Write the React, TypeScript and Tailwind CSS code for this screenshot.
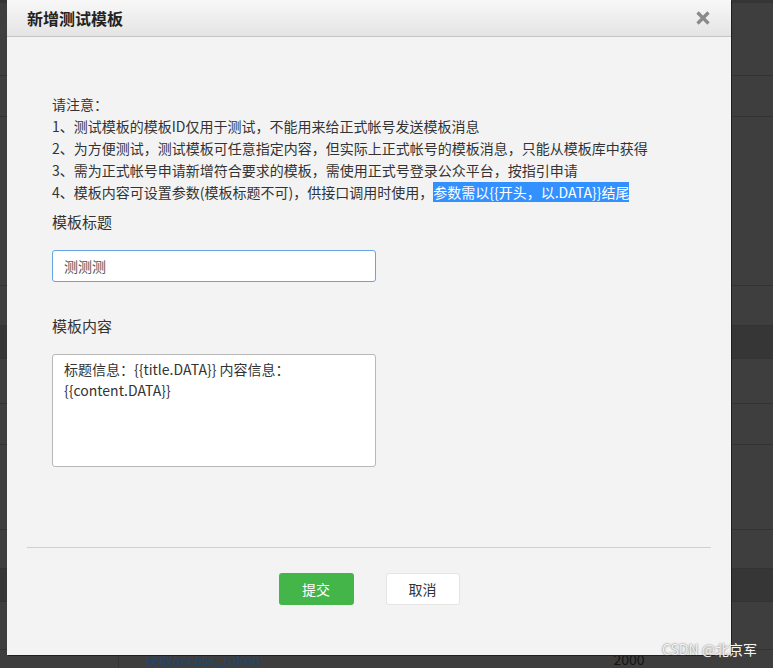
import React from "react";

const font = { fontFamily: '"Noto Sans CJK SC", "Open Sans", sans-serif' };

function CloseIcon() {
  return (
    <svg width="14" height="14" viewBox="0 0 14 14" aria-hidden="true">
      <path d="M1.5 1.5 L12.5 12.5 M12.5 1.5 L1.5 12.5" stroke="#8a8a8a" strokeWidth="3.2" />
    </svg>
  );
}

function BackgroundPage() {
  return (
    <div className="flex h-[668px] w-full flex-col bg-[#3e3e3e]">
      <div className="h-[3px] bg-[#353535]" />
      <div className="h-[73px] border-b border-[#333]" />
      <div className="h-[42px] border-b border-[#333]" />
      <div className="h-[169px] border-b border-[#333]" />
      <div className="h-[41px] border-b border-[#333]" />
      <div className="h-[33px] border-b border-[#333] bg-[#363636]" />
      <div className="h-[45px] border-b border-[#333]" />
      <div className="h-[41px] border-b border-[#333]" />
      <div className="h-[85px] border-b border-[#333]" />
      <div className="h-[40px] border-b border-[#333]" />
      <div className="h-[33px] border-b border-[#333] bg-[#363636]" />
      <div className="h-[48px] border-b border-[#333]" />
      <div className="flex flex-1">
        <div className="w-[119px] border-r border-[#333]" />
        <div className="flex flex-1 items-start pt-[1px] text-[14px] leading-[17px]" style={font}>
          <span className="ml-[26px] text-[#24466b]">获取access_token</span>
          <span className="ml-[353px] text-[#141414]">2000</span>
        </div>
      </div>
    </div>
  );
}

function Modal() {
  return (
    <div
      className="absolute left-[7px] top-0 flex h-[655px] w-[724px] flex-col bg-[#f3f3f3] shadow-[1px_1px_0_#1f1f1f]"
      style={font}
    >
      <div className="flex h-[37px] shrink-0 items-center justify-between border-b border-[#c4c4c4] bg-gradient-to-b from-[#f8f8f8] to-[#e4e4e4] pl-[20px] pr-[18px]">
        <h1 className="text-[16px] font-bold text-[#222]">新增测试模板</h1>
        <button type="button" className="flex h-[20px] w-[20px] items-center justify-center">
          <CloseIcon />
        </button>
      </div>

      <div className="flex flex-1 flex-col px-[45px] pt-[56px] text-[14px] text-[#333]">
        <div className="leading-[22px]">
          <p>请注意：</p>
          <p>1、测试模板的模板ID仅用于测试，不能用来给正式帐号发送模板消息</p>
          <p>2、为方便测试，测试模板可任意指定内容，但实际上正式帐号的模板消息，只能从模板库中获得</p>
          <p>3、需为正式帐号申请新增符合要求的模板，需使用正式号登录公众平台，按指引申请</p>
          <p>
            4、模板内容可设置参数(模板标题不可)，供接口调用时使用，
            <span className="bg-[#3390ff] text-white">参数需以{"{{"}开头，以.DATA{"}}"}结尾</span>
          </p>
        </div>

        <label className="mt-[8px] text-[15px] leading-[22px]">模板标题</label>
        <input
          defaultValue="测测测"
          className="mt-[17px] h-[32px] w-[324px] rounded-[3px] border border-[#66a3e0] bg-white px-[11px] text-[14px] text-[#555] outline-none"
          style={font}
        />

        <label className="mt-[33px] text-[15px] leading-[22px]">模板内容</label>
        <textarea
          defaultValue={"标题信息：{{title.DATA}} 内容信息：{{content.DATA}}"}
          className="mt-[17px] h-[113px] w-[324px] resize-none rounded-[3px] border border-[#b8b8b8] bg-white px-[11px] pt-[4px] text-[14px] leading-[21px] text-[#333] outline-none"
          style={font}
        />
      </div>

      <div className="mx-[20px] border-t border-[#cfcfcf]" />
      <div className="flex justify-center gap-[32px] pb-[50px] pt-[25px]">
        <button
          type="button"
          className="h-[32px] w-[75px] rounded-[3px] bg-[#44b549] text-[14px] text-white"
        >
          提交
        </button>
        <button
          type="button"
          className="h-[32px] w-[74px] rounded-[3px] border border-[#e4e4e4] bg-white text-[14px] text-[#333]"
        >
          取消
        </button>
      </div>
    </div>
  );
}

export default function App() {
  return (
    <div className="relative h-[668px] w-[773px] overflow-hidden">
      <BackgroundPage />
      <Modal />
      <div
        className="absolute bottom-[8px] right-[16px] text-[14px] text-[#f4f4f4] [text-shadow:0_0_2px_#555]"
        style={font}
      >
        CSDN @北京军
      </div>
    </div>
  );
}
